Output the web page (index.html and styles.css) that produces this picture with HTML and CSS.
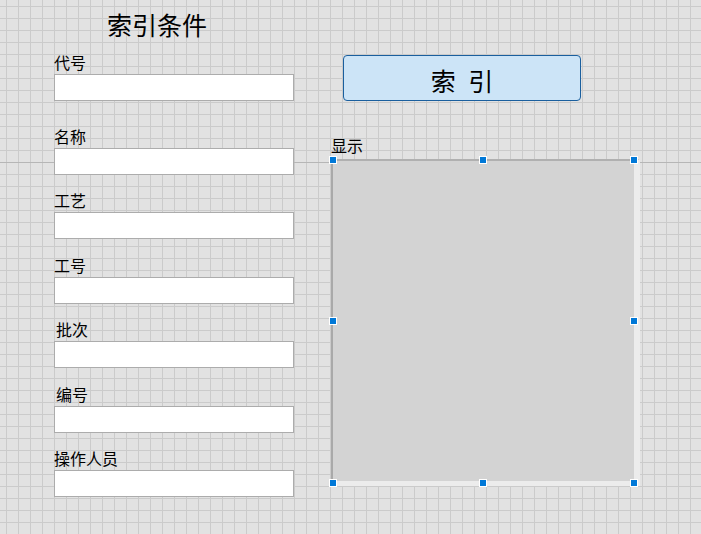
FILE: index.html
```html
<!DOCTYPE html>
<html lang="zh-CN">
<head>
<meta charset="utf-8">
<title>索引条件</title>
<link rel="stylesheet" href="styles.css">
</head>
<body>
<div class="canvas">
  <div class="left">
    <div class="title">索引条件</div>
    <div class="fields">
      <div class="field"><div class="label">代号</div><div class="input"></div></div>
      <div class="field f-wide"><div class="label">名称</div><div class="input"></div></div>
      <div class="field"><div class="label">工艺</div><div class="input"></div></div>
      <div class="field f-plus"><div class="label">工号</div><div class="input"></div></div>
      <div class="field"><div class="label lab-in">批次</div><div class="input"></div></div>
      <div class="field f-plus"><div class="label lab-in">编号</div><div class="input"></div></div>
      <div class="field"><div class="label">操作人员</div><div class="input"></div></div>
    </div>
  </div>
  <div class="right">
    <div class="button">索 引</div>
    <div class="label show-label">显示</div>
    <div class="panel">
      <span class="handle h-tl"></span>
      <span class="handle h-tm"></span>
      <span class="handle h-tr"></span>
      <span class="handle h-ml"></span>
      <span class="handle h-mr"></span>
      <span class="handle h-bl"></span>
      <span class="handle h-bm"></span>
      <span class="handle h-br"></span>
    </div>
  </div>
</div>
</body>
</html>
```

FILE: styles.css
```css
html, body {
  margin: 0;
  padding: 0;
}
body {
  font-family: "Noto Sans CJK SC", "Noto Sans", sans-serif;
  color: #000;
}
.canvas {
  width: 701px;
  height: 534px;
  overflow: hidden;
  display: flex;
  align-items: flex-start;
  background-color: #e2e2e2;
  background-image:
    linear-gradient(to bottom, transparent 162px, #b6b6b6 162px, #b6b6b6 163px, transparent 163px),
    linear-gradient(to right, #cbcbcb 1px, transparent 1px),
    linear-gradient(to bottom, #cbcbcb 1px, transparent 1px);
  background-size: 100% 100%, 12px 12px, 12px 12px;
  background-position: 0 0, 6px 6px, 6px 6px;
  background-repeat: no-repeat, repeat, repeat;
}
.left {
  margin-left: 54px;
  width: 240px;
  display: flex;
  flex-direction: column;
}
.title {
  margin-left: 53px;
  padding-top: 9px;
  font-size: 25px;
  line-height: 30px;
  white-space: nowrap;
}
.fields {
  margin-top: 13px;
  display: flex;
  flex-direction: column;
  gap: 15px;
}
.f-wide {
  margin-top: 10px;
}
.f-plus {
  margin-top: 1px;
}
.label {
  font-size: 16px;
  line-height: 20px;
  height: 20px;
  margin-bottom: 2px;
  white-space: nowrap;
}
.lab-in {
  padding-left: 2px;
}
.input {
  box-sizing: border-box;
  width: 240px;
  height: 27px;
  background: #fff;
  border: 1px solid #acacac;
}
.right {
  margin-left: 37px;
  display: flex;
  flex-direction: column;
  align-items: flex-start;
}
.button {
  box-sizing: border-box;
  margin-top: 55px;
  margin-left: 12px;
  width: 238px;
  height: 46px;
  border: 1px solid #1a5f9e;
  border-radius: 4px;
  background: #cce4f7;
  font-size: 25px;
  line-height: 30px;
  word-spacing: 7px;
  display: flex;
  align-items: center;
  justify-content: center;
  padding-top: 3px;
}
.show-label {
  margin-top: 34px;
  margin-bottom: 4px;
}
.panel {
  position: relative;
  box-sizing: border-box;
  width: 309px;
  height: 327px;
  background: #d3d3d3;
  border-left: 2px solid #a9a9a9;
  border-top: 2px solid #b0b0b0;
  border-right: 6px solid #ececec;
  border-bottom: 5px solid #ececec;
}
.handle {
  position: absolute;
  box-sizing: border-box;
  width: 8px;
  height: 8px;
  background: #0078d7;
  border: 1px solid #fff;
}
.h-tl { left: -4px; top: -5px; }
.h-tm { left: 146px; top: -5px; }
.h-tr { left: 297px; top: -5px; }
.h-ml { left: -4px; top: 156px; }
.h-mr { left: 297px; top: 156px; }
.h-bl { left: -4px; top: 318px; }
.h-bm { left: 146px; top: 318px; }
.h-br { left: 297px; top: 318px; }
```
